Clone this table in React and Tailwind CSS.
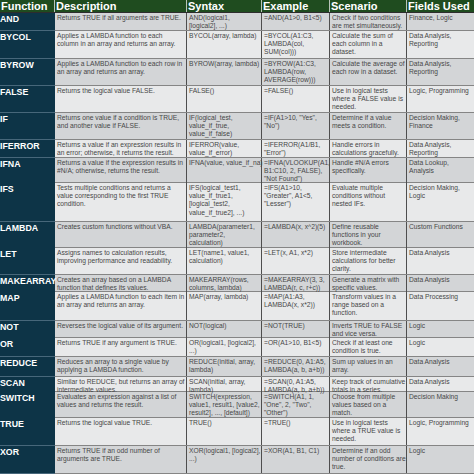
import React from 'react';

const cols = 'grid grid-cols-[55px_132px_75px_68px_77px_67px]';

const rows = [
  {
    name: 'AND', h: 'h-[18px]',
    desc: ['Returns TRUE if all arguments are TRUE.'],
    syntax: ['AND(logical1,', '[logical2], ...)'],
    example: ['=AND(A1>0, B1<5)'],
    scenario: ['Check if two conditions', 'are met simultaneously.'],
    fields: ['Finance, Logic'],
  },
  {
    name: 'BYCOL', h: 'h-[28px]',
    desc: ['Applies a LAMBDA function to each', 'column in an array and returns an array.'],
    syntax: ['BYCOL(array, lambda)'],
    example: ['=BYCOL(A1:C3,', 'LAMBDA(col,', 'SUM(col)))'],
    scenario: ['Calculate the sum of', 'each column in a', 'dataset.'],
    fields: ['Data Analysis,', 'Reporting'],
  },
  {
    name: 'BYROW', h: 'h-[27px]',
    desc: ['Applies a LAMBDA function to each row in', 'an array and returns an array.'],
    syntax: ['BYROW(array, lambda)'],
    example: ['=BYROW(A1:C3,', 'LAMBDA(row,', 'AVERAGE(row)))'],
    scenario: ['Calculate the average of', 'each row in a dataset.'],
    fields: ['Data Analysis,', 'Reporting'],
  },
  {
    name: 'FALSE', h: 'h-[27px]',
    desc: ['Returns the logical value FALSE.'],
    syntax: ['FALSE()'],
    example: ['=FALSE()'],
    scenario: ['Use in logical tests', 'where a FALSE value is', 'needed.'],
    fields: ['Logic, Programming'],
  },
  {
    name: 'IF', h: 'h-[27px]',
    desc: ['Returns one value if a condition is TRUE,', 'and another value if FALSE.'],
    syntax: ['IF(logical_test,', 'value_if_true,', 'value_if_false)'],
    example: ['=IF(A1>10, "Yes",', '"No")'],
    scenario: ['Determine if a value', 'meets a condition.'],
    fields: ['Decision Making,', 'Finance'],
  },
  {
    name: 'IFERROR', h: 'h-[18px]',
    desc: ['Returns a value if an expression results in', 'an error; otherwise, it returns the result.'],
    syntax: ['IFERROR(value,', 'value_if_error)'],
    example: ['=IFERROR(A1/B1,', '"Error")'],
    scenario: ['Handle errors in', 'calculations gracefully.'],
    fields: ['Data Analysis,', 'Reporting'],
  },
  {
    name: 'IFNA', h: 'h-[25px]',
    desc: ['Returns a value if the expression results in', '#N/A; otherwise, returns the result.'],
    syntax: ['IFNA(value, value_if_na)'],
    example: ['=IFNA(VLOOKUP(A1,', 'B1:C10, 2, FALSE),', '"Not Found")'],
    scenario: ['Handle #N/A errors', 'specifically.'],
    fields: ['Data Lookup,', 'Analysis'],
  },
  {
    name: 'IFS', h: 'h-[39px]',
    desc: ['Tests multiple conditions and returns a', 'value corresponding to the first TRUE', 'condition.'],
    syntax: ['IFS(logical_test1,', 'value_if_true1,', '[logical_test2,', 'value_if_true2], ...)'],
    example: ['=IFS(A1>10,', '"Greater", A1<5,', '"Lesser")'],
    scenario: ['Evaluate multiple', 'conditions without', 'nested IFs.'],
    fields: ['Decision Making,', 'Logic'],
  },
  {
    name: 'LAMBDA', h: 'h-[26px]',
    desc: ['Creates custom functions without VBA.'],
    syntax: ['LAMBDA(parameter1,', 'parameter2,', 'calculation)'],
    example: ['=LAMBDA(x, x^2)(5)'],
    scenario: ['Define reusable', 'functions in your', 'workbook.'],
    fields: ['Custom Functions'],
  },
  {
    name: 'LET', h: 'h-[27px]',
    desc: ['Assigns names to calculation results,', 'improving performance and readability.'],
    syntax: ['LET(name1, value1,', 'calculation)'],
    example: ['=LET(x, A1, x*2)'],
    scenario: ['Store intermediate', 'calculations for better', 'clarity.'],
    fields: ['Data Analysis'],
  },
  {
    name: 'MAKEARRAY', h: 'h-[17px]',
    desc: ['Creates an array based on a LAMBDA', 'function that defines its values.'],
    syntax: ['MAKEARRAY(rows,', 'columns, lambda)'],
    example: ['=MAKEARRAY(3, 3,', 'LAMBDA(r, c, r+c))'],
    scenario: ['Generate a matrix with', 'specific values.'],
    fields: ['Data Analysis'],
  },
  {
    name: 'MAP', h: 'h-[29px]',
    desc: ['Applies a LAMBDA function to each item in', 'an array and returns an array.'],
    syntax: ['MAP(array, lambda)'],
    example: ['=MAP(A1:A3,', 'LAMBDA(x, x*2))'],
    scenario: ['Transform values in a', 'range based on a', 'function.'],
    fields: ['Data Processing'],
  },
  {
    name: 'NOT', h: 'h-[17px]',
    desc: ['Reverses the logical value of its argument.'],
    syntax: ['NOT(logical)'],
    example: ['=NOT(TRUE)'],
    scenario: ['Inverts TRUE to FALSE', 'and vice versa.'],
    fields: ['Logic'],
  },
  {
    name: 'OR', h: 'h-[19px]',
    desc: ['Returns TRUE if any argument is TRUE.'],
    syntax: ['OR(logical1, [logical2],', '...)'],
    example: ['=OR(A1>10, B1<5)'],
    scenario: ['Check if at least one', 'condition is true.'],
    fields: ['Logic'],
  },
  {
    name: 'REDUCE', h: 'h-[20px]',
    desc: ['Reduces an array to a single value by', 'applying a LAMBDA function.'],
    syntax: ['REDUCE(initial, array,', 'lambda)'],
    example: ['=REDUCE(0, A1:A5,', 'LAMBDA(a, b, a+b))'],
    scenario: ['Sum up values in an', 'array.'],
    fields: ['Data Analysis'],
  },
  {
    name: 'SCAN', h: 'h-[15px]',
    desc: ['Similar to REDUCE, but returns an array of', 'intermediate values.'],
    syntax: ['SCAN(initial, array,', 'lambda)'],
    example: ['=SCAN(0, A1:A5,', 'LAMBDA(a, b, a+b))'],
    scenario: ['Keep track of cumulative', 'totals in a series.'],
    fields: ['Data Analysis'],
  },
  {
    name: 'SWITCH', h: 'h-[26px]',
    desc: ['Evaluates an expression against a list of', 'values and returns the result.'],
    syntax: ['SWITCH(expression,', 'value1, result1, [value2,', 'result2], ..., [default])'],
    example: ['=SWITCH(A1, 1,', '"One", 2, "Two",', '"Other")'],
    scenario: ['Choose from multiple', 'values based on a', 'match.'],
    fields: ['Decision Making'],
  },
  {
    name: 'TRUE', h: 'h-[28px]',
    desc: ['Returns the logical value TRUE.'],
    syntax: ['TRUE()'],
    example: ['=TRUE()'],
    scenario: ['Use in logical tests', 'where a TRUE value is', 'needed.'],
    fields: ['Logic, Programming'],
  },
  {
    name: 'XOR', h: 'h-[28px]',
    desc: ['Returns TRUE if an odd number of', 'arguments are TRUE.'],
    syntax: ['XOR(logical1, [logical2],', '...)'],
    example: ['=XOR(A1, B1, C1)'],
    scenario: ['Determine if an odd', 'number of conditions are', 'true.'],
    fields: ['Logic'],
  },
];

const headers = ['Function', 'Description', 'Syntax', 'Example', 'Scenario', 'Fields Used'];

const Cell = ({ lines, last }) => (
  <div
    className={
      'whitespace-nowrap pl-[2px] pt-[0.5px] text-[6.7px] leading-[8.4px] text-[#474747] ' +
      (last ? '' : 'border-r border-[#4e4e4e]')
    }
  >
    {lines.map((l, i) => (
      <div key={i}>{l}</div>
    ))}
  </div>
);

export default function App() {
  return (
    <div
      className="h-[474px] w-[474px] overflow-hidden bg-white"
      style={{ fontFamily: '"Liberation Sans", Arial, sans-serif' }}
    >
      <div className={cols + ' h-[13px] bg-[#1f4c1f] border-b border-[#2d2d2d]'}>
        {headers.map((h, i) => (
          <div
            key={h}
            className={
              'whitespace-nowrap pl-[1px] text-[11px] font-bold leading-[12px] text-white ' +
              (i < headers.length - 1 ? 'border-r border-[#b9c4b9]' : '')
            }
          >
            {h}
          </div>
        ))}
      </div>

      {rows.map((r, i) => (
        <div
          key={r.name}
          className={
            cols +
            ' ' +
            r.h +
            ' border-b border-[#858585] ' +
            (i % 2 === 0 ? 'bg-[#d3d5d7]' : 'bg-[#e8e9ea]')
          }
        >
          <div className="relative z-10 -mb-px whitespace-nowrap border-b border-[#47677a] bg-[#0d3447] pt-[1px] text-[8.8px] font-bold leading-[11px] text-white">
            {r.name}
          </div>
          <Cell lines={r.desc} />
          <Cell lines={r.syntax} />
          <Cell lines={r.example} />
          <Cell lines={r.scenario} />
          <Cell lines={r.fields} last />
        </div>
      ))}
    </div>
  );
}
